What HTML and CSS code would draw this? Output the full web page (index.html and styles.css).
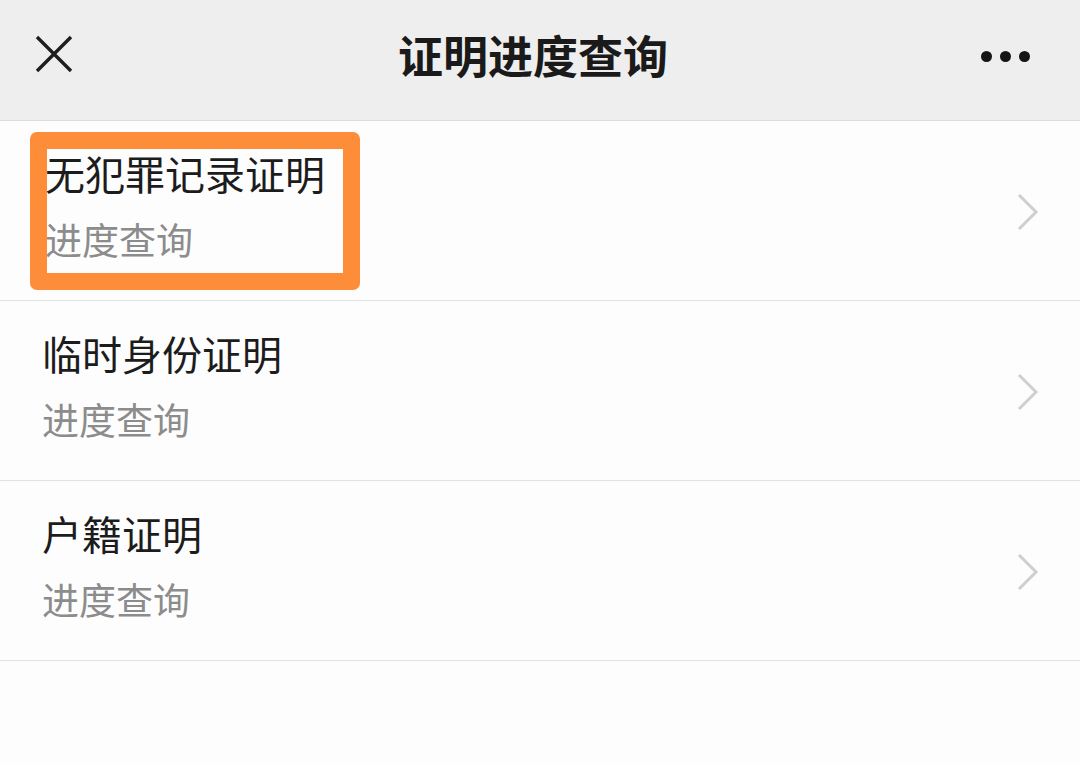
FILE: index.html
```html
<!DOCTYPE html>
<html lang="zh-CN">
<head>
<meta charset="utf-8">
<link rel="stylesheet" href="styles.css">
</head>
<body>
<div class="page">
  <header class="nav">
    <div class="nav-left">
      <svg class="close" width="40" height="40" viewBox="0 0 40 40"><path d="M3 3 L37 37 M37 3 L3 37" stroke="#1e1e1e" stroke-width="3.4" fill="none"/></svg>
    </div>
    <div class="nav-title">证明进度查询</div>
    <div class="nav-right">
      <span class="dot"></span><span class="dot"></span><span class="dot"></span>
    </div>
  </header>
  <ul class="list">
    <li class="item">
      <div class="text">
        <div class="title">无犯罪记录证明</div>
        <div class="sub">进度查询</div>
      </div>
      <svg class="chev" width="24" height="40" viewBox="0 0 24 40"><path d="M3 3 L20 20 L3 37" stroke="#cfcfcf" stroke-width="3" fill="none"/></svg>
      <div class="mark"></div>
    </li>
    <li class="item">
      <div class="text">
        <div class="title">临时身份证明</div>
        <div class="sub">进度查询</div>
      </div>
      <svg class="chev" width="24" height="40" viewBox="0 0 24 40"><path d="M3 3 L20 20 L3 37" stroke="#cfcfcf" stroke-width="3" fill="none"/></svg>
    </li>
    <li class="item">
      <div class="text">
        <div class="title">户籍证明</div>
        <div class="sub">进度查询</div>
      </div>
      <svg class="chev" width="24" height="40" viewBox="0 0 24 40"><path d="M3 3 L20 20 L3 37" stroke="#cfcfcf" stroke-width="3" fill="none"/></svg>
    </li>
  </ul>
</div>
</body>
</html>
```
FILE: styles.css
```css
* { box-sizing: border-box; }
html, body {
  margin: 0;
  padding: 0;
  background: #fefdfe;
  font-family: "Noto Sans CJK SC", "Noto Sans", sans-serif;
}
.page {
  width: 1080px;
  height: 763px;
  overflow: hidden;
}
.nav {
  height: 121px;
  background: #eeeeee;
  border-bottom: 1px solid #dcdcdc;
  display: flex;
  align-items: center;
  justify-content: space-between;
  padding: 0 50px 12px 34px;
  position: relative;
}
.nav-left { width: 100px; display: flex; }
.close { display: block; }
.nav-title {
  position: absolute;
  left: 0; right: 0; top: 0;
  height: 115px;
  display: flex;
  align-items: center;
  justify-content: center;
  font-size: 45px;
  font-weight: 700;
  color: #1a1a1a;
  pointer-events: none;
  transform: translate(-7px, -3px);
}
.nav-right {
  display: flex;
  gap: 8px;
  width: 100px;
  justify-content: flex-end;
  transform: translateY(2px);
}
.dot {
  width: 11px;
  height: 11px;
  border-radius: 50%;
  background: #151515;
}
.list {
  list-style: none;
  margin: 0;
  padding: 0;
}
.item {
  height: 180px;
  border-bottom: 1px solid #e2e2e2;
  display: flex;
  align-items: center;
  justify-content: space-between;
  padding: 0 40px 0 42px;
  position: relative;
  background: #fefdfe;
}
.text {
  display: flex;
  flex-direction: column;
  gap: 9px;
  margin-top: -11px;
}
.title {
  font-size: 40px;
  line-height: 58px;
  color: #1c1c1c;
}
.sub {
  font-size: 37px;
  line-height: 56px;
  color: #8c8c8c;
}
.chev { display: block; margin-top: 2px; }
.item:first-child .text { padding-left: 3px; }
.mark {
  position: absolute;
  left: 30px;
  top: 11px;
  width: 330px;
  height: 158px;
  border: 17px solid #fd8d38;
  border-radius: 7px;
  pointer-events: none;
}
```
